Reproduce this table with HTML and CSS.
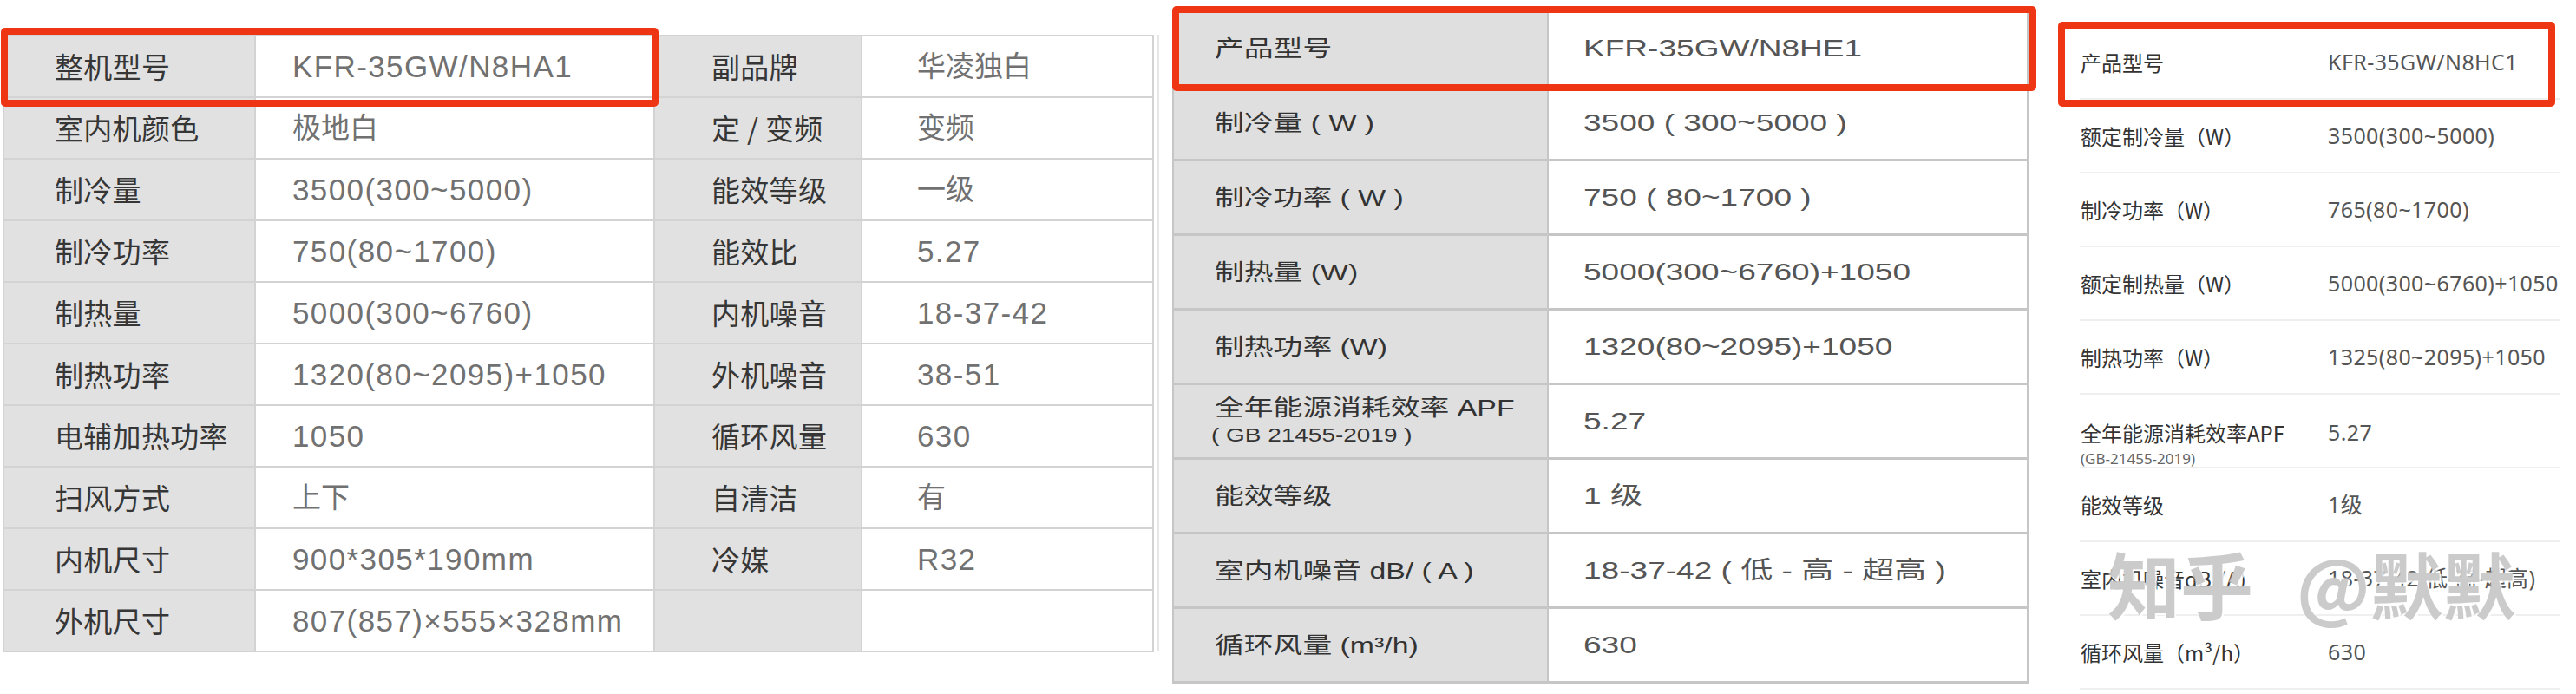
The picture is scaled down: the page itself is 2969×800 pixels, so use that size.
FILE: index.html
```html
<!DOCTYPE html>
<html lang="zh-CN">
<head>
<meta charset="utf-8">
<title>空调参数对比</title>
<link rel="stylesheet" href="styles.css">
</head>
<body>
<div class="page">
  <section class="panel p1">
    <div class="grid-a">
      <div class="a-lab">整机型号</div><div class="a-val">KFR-35GW/N8HA1</div><div class="a-lab r">副品牌</div><div class="a-val r cn">华凌独白</div>
      <div class="a-lab">室内机颜色</div><div class="a-val cn">极地白</div><div class="a-lab r">定 / 变频</div><div class="a-val r cn">变频</div>
      <div class="a-lab">制冷量</div><div class="a-val">3500(300~5000)</div><div class="a-lab r">能效等级</div><div class="a-val r cn">一级</div>
      <div class="a-lab">制冷功率</div><div class="a-val">750(80~1700)</div><div class="a-lab r">能效比</div><div class="a-val r">5.27</div>
      <div class="a-lab">制热量</div><div class="a-val">5000(300~6760)</div><div class="a-lab r">内机噪音</div><div class="a-val r">18-37-42</div>
      <div class="a-lab">制热功率</div><div class="a-val">1320(80~2095)+1050</div><div class="a-lab r">外机噪音</div><div class="a-val r">38-51</div>
      <div class="a-lab">电辅加热功率</div><div class="a-val">1050</div><div class="a-lab r">循环风量</div><div class="a-val r">630</div>
      <div class="a-lab">扫风方式</div><div class="a-val cn">上下</div><div class="a-lab r">自清洁</div><div class="a-val r cn">有</div>
      <div class="a-lab">内机尺寸</div><div class="a-val">900*305*190mm</div><div class="a-lab r">冷媒</div><div class="a-val r">R32</div>
      <div class="a-lab">外机尺寸</div><div class="a-val">807(857)×555×328mm</div><div class="a-lab r"></div><div class="a-val r"></div>
    </div>
    <div class="redbox rb-a"></div>
  </section>

  <section class="panel p2">
    <div class="grid-b">
      <div class="b-lab"><span class="s">产品型号</span></div><div class="b-val"><span class="s">KFR-35GW/N8HE1</span></div>
      <div class="b-lab"><span class="s">制冷量 ( W )</span></div><div class="b-val"><span class="s">3500 ( 300~5000 )</span></div>
      <div class="b-lab"><span class="s">制冷功率 ( W )</span></div><div class="b-val"><span class="s">750 ( 80~1700 )</span></div>
      <div class="b-lab"><span class="s">制热量 (W)</span></div><div class="b-val"><span class="s">5000(300~6760)+1050</span></div>
      <div class="b-lab"><span class="s">制热功率 (W)</span></div><div class="b-val"><span class="s">1320(80~2095)+1050</span></div>
      <div class="b-lab two"><span class="s">全年能源消耗效率 APF</span><span class="s sub">( GB 21455-2019 )</span></div><div class="b-val"><span class="s">5.27</span></div>
      <div class="b-lab"><span class="s">能效等级</span></div><div class="b-val"><span class="s">1 级</span></div>
      <div class="b-lab"><span class="s">室内机噪音 dB/ ( A )</span></div><div class="b-val"><span class="s">18-37-42 ( 低 - 高 - 超高 )</span></div>
      <div class="b-lab"><span class="s">循环风量 (m³/h)</span></div><div class="b-val"><span class="s">630</span></div>
    </div>
    <div class="redbox rb-b"></div>
  </section>

  <section class="panel p3">
    <div class="grid-c">
      <div class="c-lab">产品型号</div><div class="c-val">KFR-35GW/N8HC1</div>
      <div class="c-lab">额定制冷量（W）</div><div class="c-val">3500(300~5000)</div>
      <div class="c-lab">制冷功率（W）</div><div class="c-val">765(80~1700)</div>
      <div class="c-lab">额定制热量（W）</div><div class="c-val">5000(300~6760)+1050</div>
      <div class="c-lab">制热功率（W）</div><div class="c-val">1325(80~2095)+1050</div>
      <div class="c-lab top"><span>全年能源消耗效率APF</span><span class="c-sub">(GB-21455-2019)</span></div><div class="c-val top">5.27</div>
      <div class="c-lab">能效等级</div><div class="c-val">1级</div>
      <div class="c-lab">室内机噪音dB/(A)</div><div class="c-val">18-37-42(低-高-超高)</div>
      <div class="c-lab">循环风量（m³/h）</div><div class="c-val">630</div>
    </div>
    <div class="redbox rb-c"></div>
    <div class="wm"><span>知乎</span><span>@默默</span></div>
  </section>
</div>
</body>
</html>
```

FILE: styles.css
```css
* { box-sizing: border-box; }

html, body {
  margin: 0;
  padding: 0;
  background: #ffffff;
}

body {
  width: 2969px;
  height: 800px;
  overflow: hidden;
  font-family: "Noto Sans CJK SC", sans-serif;
}

.page {
  display: flex;
  align-items: flex-start;
}

.panel {
  position: relative;
  height: 800px;
  flex: none;
}

/* ---------- left table ---------- */
.p1 {
  width: 1333px;
  padding: 40px 0 0 3px;
}

.grid-a {
  display: grid;
  grid-template-columns: 290px 460px 239px 336px;
  grid-auto-rows: 71px;
  width: 1327px;
  border-top: 2px solid #d3d3d3;
  border-left: 2px solid #d3d3d3;
}

.grid-a > div {
  display: flex;
  align-items: center;
  white-space: nowrap;
  border-right: 2px solid #d3d3d3;
  border-bottom: 2px solid #d3d3d3;
  line-height: 1;
}

.a-lab {
  background: #e1e1e1;
  color: #363636;
  font-family: "Noto Sans CJK SC", sans-serif;
  font-size: 33px;
  padding-left: 58px;
  letter-spacing: 0.3px;
}

.a-lab.r { padding-left: 65px; }

.a-val {
  background: #ffffff;
  color: #717171;
  font-family: "Liberation Sans", "Noto Sans CJK SC", sans-serif;
  font-size: 35px;
  letter-spacing: 1.4px;
  padding-left: 42px;
}

.a-val.r { padding-left: 63px; }
.a-val.cn { letter-spacing: 0; font-size: 33px; }

/* ---------- middle table ---------- */
.p2 {
  width: 1030px;
  padding: 12px 0 0 18px;
}

.p2::before {
  content: "";
  position: absolute;
  left: 1px;
  top: 40px;
  bottom: 50px;
  border-left: 2px solid #e6e6e6;
}

.grid-b {
  display: grid;
  grid-template-columns: 432px 553px;
  grid-auto-rows: 86px;
  width: 987px;
  border-top: 2px solid #c6c6c6;
  border-left: 2px solid #c6c6c6;
}

.grid-b > div {
  display: flex;
  align-items: center;
  white-space: nowrap;
  border-right: 2px solid #c6c6c6;
  border-bottom: 3px solid #c6c6c6;
  font-family: "Liberation Sans", "Noto Sans CJK SC", sans-serif;
  line-height: 1;
}

.b-lab {
  background: #dfdfdf;
  color: #333333;
  font-size: 26px;
  padding-left: 47px;
}

.b-val {
  background: #ffffff;
  color: #555555;
  font-size: 28.5px;
  padding-left: 40px;
}

.s {
  display: inline-block;
  transform: scaleX(1.3);
  transform-origin: 0 50%;
}

.b-lab.two {
  flex-direction: column;
  align-items: flex-start;
  justify-content: center;
  gap: 9px;
}

.b-lab .sub {
  font-size: 21.5px;
  margin-left: -4px;
}

/* ---------- right table ---------- */
.p3 {
  width: 606px;
  padding: 30px 0 0 34px;
}

.grid-c {
  display: grid;
  grid-template-columns: 286px 267px;
  grid-auto-rows: 85px;
  width: 553px;
}

.grid-c > div {
  display: flex;
  align-items: center;
  white-space: nowrap;
  border-bottom: 2px solid #efefef;
  line-height: 1.3;
}

.c-lab {
  color: #333333;
  font-family: "Noto Sans CJK SC", sans-serif;
  font-size: 24px;
  padding-left: 1px;
}

.c-val {
  color: #555555;
  font-family: "Noto Sans", "Noto Sans CJK SC", sans-serif;
  font-size: 25px;
  letter-spacing: 0.4px;
}

.c-lab.top {
  flex-direction: column;
  align-items: flex-start;
  justify-content: flex-start;
  padding-top: 28px;
}

.c-val.top {
  align-items: flex-start;
  padding-top: 27px;
}

.c-sub {
  font-family: "Noto Sans", "Noto Sans CJK SC", sans-serif;
  font-size: 17px;
  color: #666666;
  margin-top: 4px;
}

/* ---------- highlight frames ---------- */
.redbox {
  position: absolute;
  border: 8px solid #ee3514;
  border-radius: 5px;
  pointer-events: none;
}

.rb-a { left: 1px; top: 32px; width: 758px; height: 91px; }
.rb-b { left: 18px; top: 7px; width: 996px; height: 98px; }
.rb-c { left: 9px; top: 25px; width: 573px; height: 98px; }

/* ---------- watermark ---------- */
.wm {
  position: absolute;
  left: 66px;
  top: 630px;
  display: flex;
  gap: 50px;
  font-family: "Noto Sans CJK SC", sans-serif;
  font-weight: 700;
  font-size: 84px;
  line-height: 1;
  color: rgba(160, 160, 160, 0.55);
  text-shadow: 0 0 2px #ffffff, 2px 2px 0 rgba(255, 255, 255, 0.8);
  white-space: nowrap;
}
```
